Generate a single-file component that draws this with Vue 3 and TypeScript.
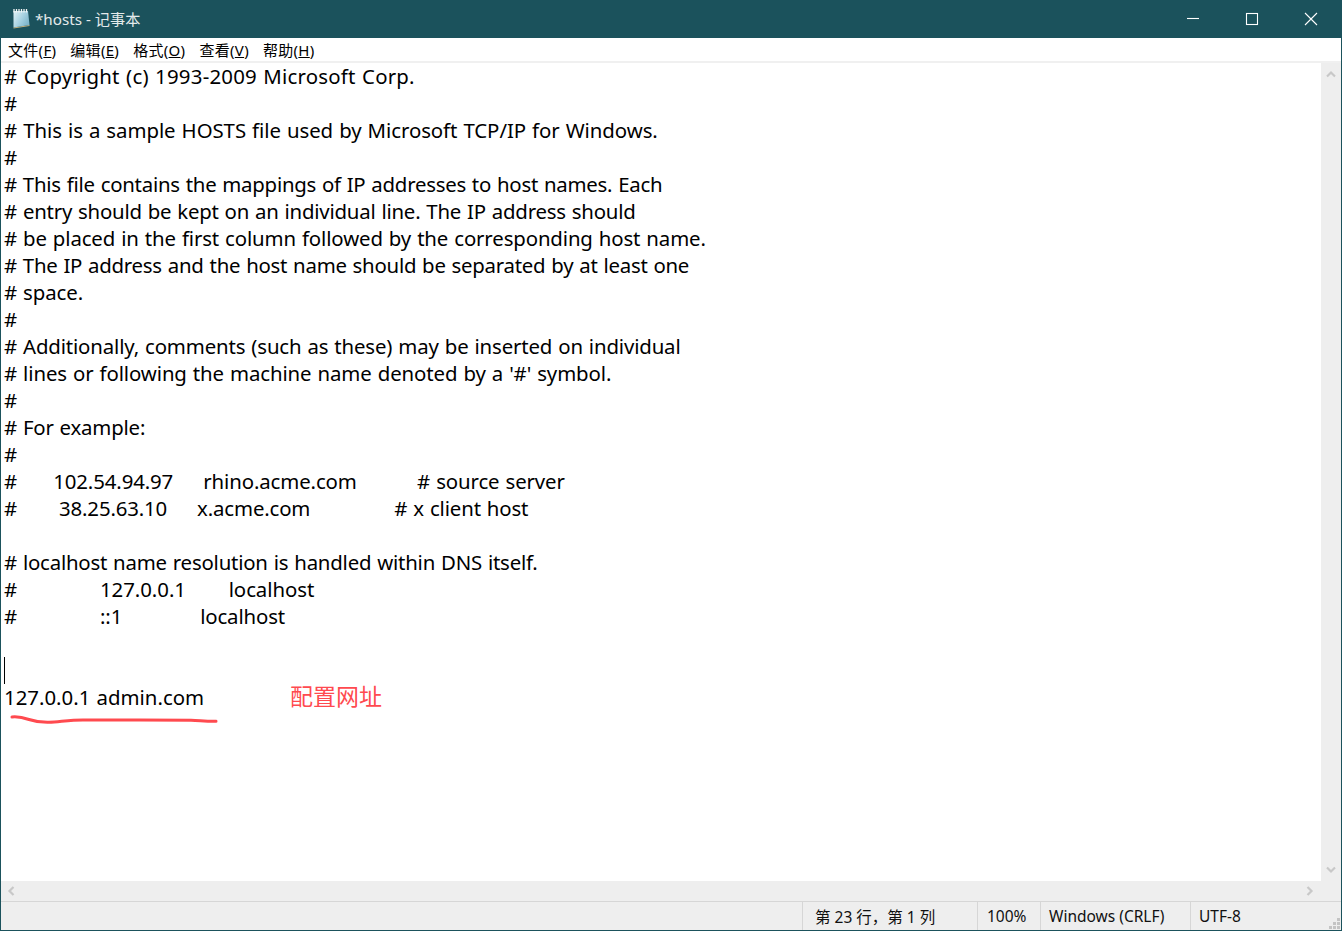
<script setup lang="ts">
const menus = [
  { label: '文件', key: 'F' },
  { label: '编辑', key: 'E' },
  { label: '格式', key: 'O' },
  { label: '查看', key: 'V' },
  { label: '帮助', key: 'H' },
]
// track: per-line letter spacing, to keep each line the width it has in the original
const lines: { text: string; track: number }[] = [
  { text: '# Copyright (c) 1993-2009 Microsoft Corp.', track: 0.22 },
  { text: '#', track: 0 },
  { text: '# This is a sample HOSTS file used by Microsoft TCP/IP for Windows.', track: -0.07 },
  { text: '#', track: 0 },
  { text: '# This file contains the mappings of IP addresses to host names. Each', track: -0.25 },
  { text: '# entry should be kept on an individual line. The IP address should', track: -0.22 },
  { text: '# be placed in the first column followed by the corresponding host name.', track: -0.13 },
  { text: '# The IP address and the host name should be separated by at least one', track: -0.25 },
  { text: '# space.', track: -0.1 },
  { text: '#', track: 0 },
  { text: '# Additionally, comments (such as these) may be inserted on individual', track: -0.15 },
  { text: "# lines or following the machine name denoted by a '#' symbol.", track: -0.11 },
  { text: '#', track: 0 },
  { text: '# For example:', track: -0.2 },
  { text: '#', track: 0 },
  { text: '#      102.54.94.97     rhino.acme.com          # source server', track: -0.12 },
  { text: '#       38.25.63.10     x.acme.com              # x client host', track: -0.15 },
  { text: '', track: 0 },
  { text: '# localhost name resolution is handled within DNS itself.', track: -0.21 },
  { text: '#\t127.0.0.1       localhost', track: -0.05 },
  { text: '#\t::1             localhost', track: -0.15 },
  { text: '', track: 0 },
]
</script>

<template>
  <div class="window">
    <header class="titlebar">
      <svg class="app-icon" width="20" height="22" viewBox="0 0 20 22">
        <defs>
          <linearGradient id="pad" x1="0" y1="0" x2="1" y2="0.6">
            <stop offset="0" stop-color="#e4f2f6" />
            <stop offset="0.55" stop-color="#a9d3e2" />
            <stop offset="1" stop-color="#7fb6cb" />
          </linearGradient>
        </defs>
        <path d="M2.500 20.500 L18.500 18 L18.500 17 L2.500 19.500 Z" fill="#c8b078" />
        <path d="M2.500 3 L17 3 L18.500 17 L2.500 19.500 Z" fill="url(#pad)" />
        <path d="M3 1 V4.500 M5.500 1 V4.500 M8 1 V4.500 M10.500 1 V4.500 M13 1 V4.500 M15.500 1 V4.500" stroke="#f2f4f4" stroke-width="1.300" />
      </svg>
      <span class="title">*hosts - 记事本</span>
      <div class="controls">
        <svg width="14" height="14" viewBox="0 0 14 14"><path d="M1 6.500 H13" stroke="#fff" stroke-width="1.100" /></svg>
        <svg width="14" height="14" viewBox="0 0 14 14"><rect x="1.500" y="1.500" width="11" height="11" fill="none" stroke="#fff" stroke-width="1.100" /></svg>
        <svg width="14" height="14" viewBox="0 0 14 14"><path d="M1 1 L13 13 M13 1 L1 13" stroke="#fff" stroke-width="1.100" /></svg>
      </div>
    </header>

    <nav class="menubar">
      <span v-for="m in menus" :key="m.key" class="menu">{{ m.label }}(<u>{{ m.key }}</u>)</span>
    </nav>

    <div class="body">
      <main class="editor">
        <div
          v-for="(line, i) in lines"
          :key="i"
          class="line"
          :style="{ letterSpacing: line.track + 'px' }"
        >{{ line.text }}</div>
        <div class="line caret-line"><i class="caret"></i></div>
        <div class="line last">
          <span class="entry">127.0.0.1 admin.com</span>
          <span class="note">配置网址</span>
          <svg class="scribble" width="212" height="12" viewBox="0 0 212 12">
            <path d="M3 3 C8 2.500 14 3.500 20 5.500 C26 7.500 32 8.500 40 8.300 C50 8 60 6 74 6 L130 6 L182 6.300 C192 6.700 198 7.500 207 7.300" fill="none" stroke="#ff4a4f" stroke-width="3" stroke-linecap="round" />
          </svg>
        </div>
      </main>
      <aside class="vscroll">
        <svg width="10" height="8" viewBox="0 0 10 8"><path d="M1 6.500 L5 2.500 L9 6.500" fill="none" stroke="#c8c8c8" stroke-width="2.200" /></svg>
        <svg width="10" height="8" viewBox="0 0 10 8"><path d="M1 1.500 L5 5.500 L9 1.500" fill="none" stroke="#c8c8c8" stroke-width="2.200" /></svg>
      </aside>
    </div>

    <div class="hscroll">
      <svg width="8" height="10" viewBox="0 0 8 10"><path d="M6.500 1 L2.500 5 L6.500 9" fill="none" stroke="#c8c8c8" stroke-width="2.200" /></svg>
      <svg width="8" height="10" viewBox="0 0 8 10"><path d="M1.500 1 L5.500 5 L1.500 9" fill="none" stroke="#c8c8c8" stroke-width="2.200" /></svg>
    </div>

    <footer class="statusbar">
      <span class="cell pos">第 23 行，第 1 列</span>
      <span class="cell zoom">100%</span>
      <span class="cell eol">Windows (CRLF)</span>
      <span class="cell enc">UTF-8</span>
      <svg class="grip" width="11" height="11" viewBox="0 0 11 11" fill="#c4c4c4">
        <rect x="8" y="0" width="3" height="3" /><rect x="4" y="4" width="3" height="3" /><rect x="8" y="4" width="3" height="3" />
        <rect x="0" y="8" width="3" height="3" /><rect x="4" y="8" width="3" height="3" /><rect x="8" y="8" width="3" height="3" />
      </svg>
    </footer>
  </div>
</template>

<style>
html, body { margin: 0; background: #fff; }
</style>

<style scoped>
.window {
  box-sizing: border-box;
  width: 1342px;
  height: 931px;
  display: flex;
  flex-direction: column;
  border: 1px solid #1b525c;
  border-top: 0;
  background: #fff;
  overflow: hidden;
  font-family: "Noto Sans", "Noto Sans CJK SC", sans-serif;
  color: #000;
}
.titlebar {
  height: 38px;
  flex: none;
  margin: 0 -1px;
  background: #1b525c;
  display: flex;
  align-items: center;
  padding-left: 11px;
  color: #e4eaeb;
  font-size: 15.200px;
}
.app-icon { margin-right: 4px; }
.title { margin-bottom: 2px; }
.controls {
  margin-left: auto;
  display: flex;
  align-items: center;
  gap: 45px;
  padding-right: 24px;
}
.menubar {
  box-sizing: border-box;
  height: 25px;
  flex: none;
  display: flex;
  align-items: center;
  gap: 14px;
  padding: 0 0 1px 7px;
  font-size: 15px;
  letter-spacing: 0.300px;
  border-bottom: 2px solid #f0f0f0;
}
.body { flex: 1; min-height: 0; display: flex; }
.editor {
  flex: 1;
  padding: 0 0 0 3px;
  font-size: 20.400px;
  word-spacing: 0.850px;
  line-height: 27px;
  tab-size: 96px;
}
.line { height: 27px; white-space: pre; }
.caret-line { position: relative; }
.caret {
  position: absolute;
  left: 0;
  top: 0;
  width: 1px;
  height: 27px;
  background: #000;
}
.last { display: flex; position: relative; }
.entry { width: 286px; }
.note { color: #ff4a4f; font-size: 23px; margin-top: -1px; word-spacing: 0; }
.scribble { position: absolute; left: 5px; top: 30px; }
.vscroll {
  width: 20px;
  flex: none;
  background: #eeeeee;
  display: flex;
  flex-direction: column;
  justify-content: space-between;
  align-items: center;
  padding: 7px 0;
  box-sizing: border-box;
}
.hscroll {
  box-sizing: border-box;
  height: 20px;
  flex: none;
  background: #eeeeee;
  display: flex;
  align-items: center;
  justify-content: space-between;
  padding: 0 27px 0 6px;
}
.statusbar {
  box-sizing: border-box;
  height: 29px;
  flex: none;
  background: #eeeeee;
  border-top: 1px solid #d6d6d6;
  display: flex;
  align-items: center;
  justify-content: flex-end;
  font-size: 15.500px;
  color: #111;
  position: relative;
}
.cell {
  height: 100%;
  display: flex;
  align-items: center;
  box-sizing: border-box;
  border-left: 1px solid #d6d6d6;
}
.pos { width: 175px; padding-left: 12px; }
.zoom { width: 63px; padding-left: 9px; }
.eol { width: 150px; padding-left: 8px; }
.enc { width: 151px; padding-left: 8px; }
.grip { position: absolute; right: 1px; bottom: 1px; }
</style>
